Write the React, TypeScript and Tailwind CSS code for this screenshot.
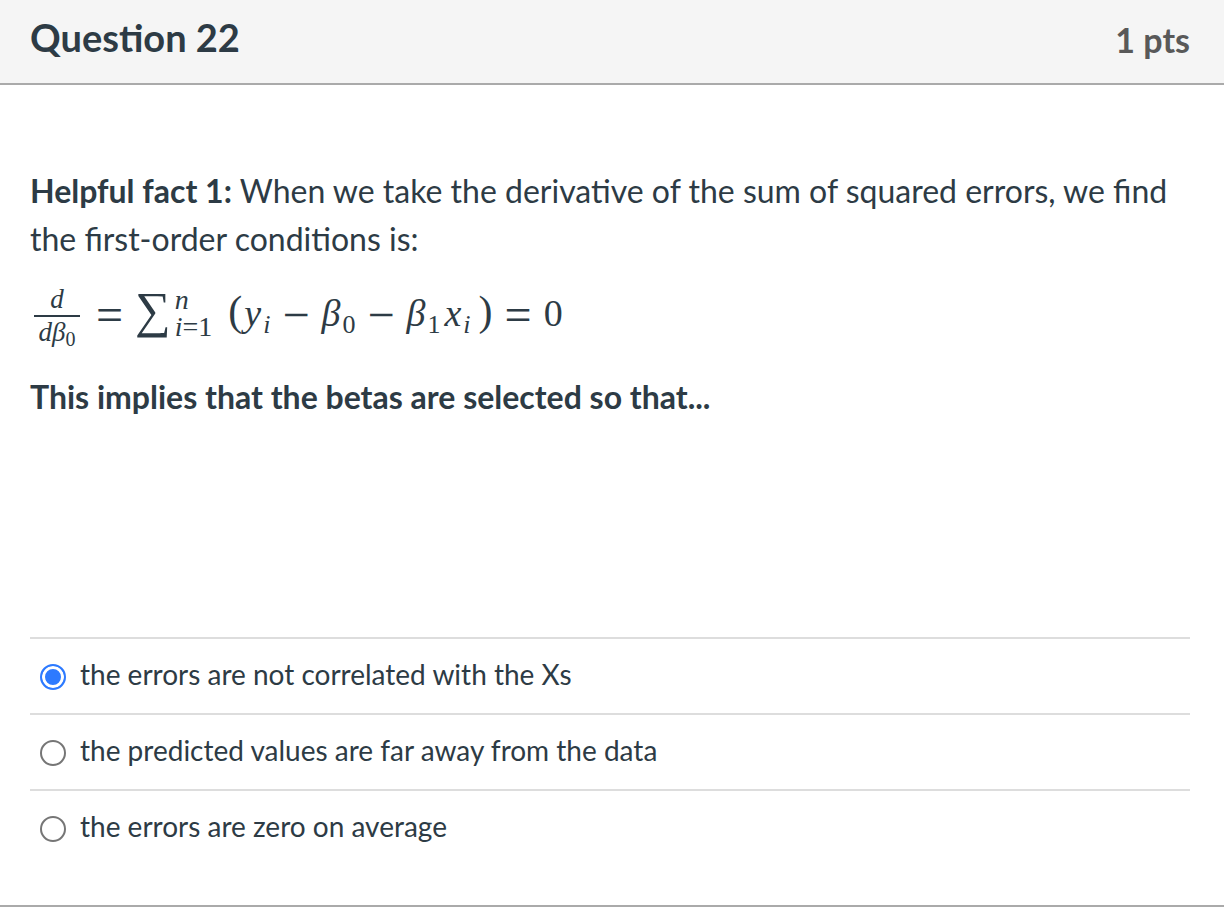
import { ReactNode, useState } from "react";

const answers = [
  "the errors are not correlated with the Xs",
  "the predicted values are far away from the data",
  "the errors are zero on average",
];

const Sub = ({ children }: { children: ReactNode }) => (
  <sub className="pl-[2px] text-[26px]">{children}</sub>
);

const Op = ({ children }: { children: ReactNode }) => (
  <span className="px-3 text-5xl leading-none">{children}</span>
);

const Paren = ({ children }: { children: ReactNode }) => (
  <span className="pb-2 text-[42px] leading-none">{children}</span>
);

// d/dβ0 = Σ (yi − β0 − β1xi) = 0
function Equation() {
  return (
    <div className="flex h-16 items-center px-1 font-['Liberation_Serif',serif] text-[38px] leading-none">
      <span className="mr-1 flex w-[46px] flex-col items-center pt-1 text-[27px]">
        <i className="pb-1 leading-6">d</i>
        <span className="w-full border-t-2 border-[#2d3b45] text-center leading-[30px]">
          <i>dβ</i>
          <sub className="text-xl">0</sub>
        </span>
      </span>
      <Op>=</Op>
      <span className="pb-[10px] text-[50px]">∑</span>
      <span className="mr-4 flex flex-col pb-1 pl-1 text-[28px] leading-[27px]">
        <i>n</i>
        <span>
          <i>i</i>=1
        </span>
      </span>
      <Paren>(</Paren>
      <span className="pb-1 pl-[2px]">
        <i>y</i>
        <Sub>
          <i>i</i>
        </Sub>
      </span>
      <Op>−</Op>
      <span className="pb-1">
        <i>β</i>
        <Sub>0</Sub>
      </span>
      <Op>−</Op>
      <span className="pb-1">
        <i>β</i>
        <Sub>1</Sub>
      </span>
      <span className="pr-2 pb-1 pl-1">
        <i>x</i>
        <Sub>
          <i>i</i>
        </Sub>
      </span>
      <Paren>)</Paren>
      <Op>=</Op>
      <span className="pb-1">0</span>
    </div>
  );
}

function App() {
  const [selected, setSelected] = useState(0);

  return (
    <div className="border-b-2 border-[#aaaaaa] bg-white font-[Lato,sans-serif] text-[#2d3b45]">
      <header className="flex items-start justify-between border-b-2 border-[#aaaaaa] bg-[#f5f5f5] pt-4 pr-[34px] pb-5 pl-[30px] font-bold">
        <h1 className="text-[38px] leading-[42px]">Question 22</h1>
        <span className="text-[34px] leading-[47px] text-[#595959]">1 pts</span>
      </header>
      <div className="pt-[82px] pr-[34px] pb-10 pl-[30px]">
        <p className="text-[32px] leading-12">
          <strong>Helpful fact 1:</strong> When we take the derivative of the
          sum of squared errors, we find the first-order conditions is:
        </p>
        <div className="mt-5">
          <Equation />
        </div>
        <p className="mt-[26px] text-[32px] leading-12 font-bold">
          This implies that the betas are selected so that...
        </p>
        <fieldset className="mt-[216px]">
          {answers.map((answer, i) => (
            <label
              key={answer}
              className="flex items-center gap-[14px] border-t-2 border-[#dddddd] px-[10px] pt-[17px] pb-[15px] text-[28px]"
            >
              <input
                type="radio"
                name="answer"
                className="size-[26px] appearance-none rounded-full border-2 border-[#767676] bg-white checked:border-[#2d7aff] checked:bg-[#2d7aff] checked:shadow-[inset_0_0_0_3px_white]"
                checked={selected === i}
                onChange={() => setSelected(i)}
              />
              <span className="pb-[6px] leading-9">{answer}</span>
            </label>
          ))}
        </fieldset>
      </div>
    </div>
  );
}

export default App;
